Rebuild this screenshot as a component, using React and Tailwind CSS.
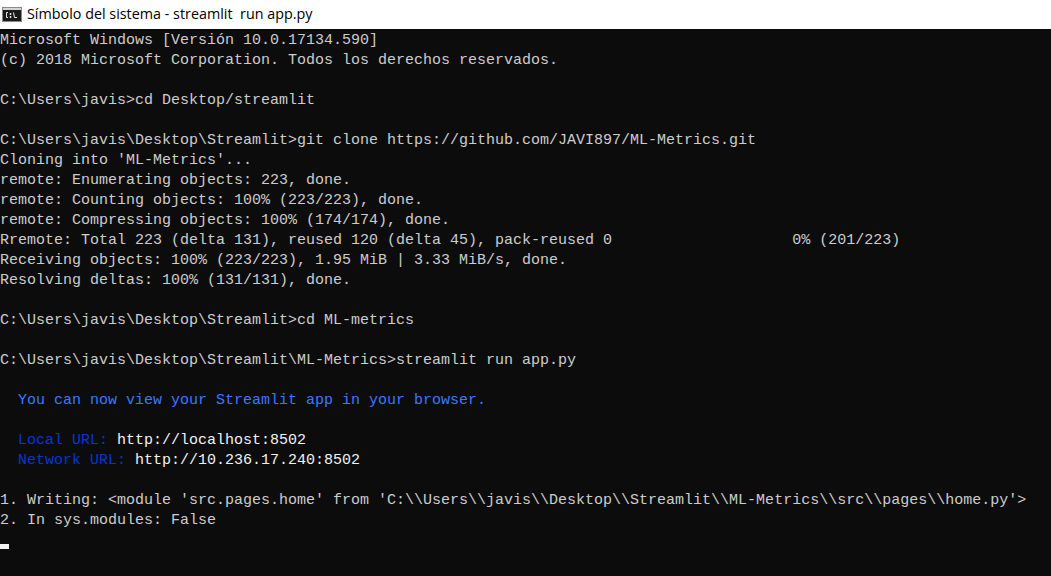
const lines = [
  "Microsoft Windows [Versión 10.0.17134.590]",
  "(c) 2018 Microsoft Corporation. Todos los derechos reservados.",
  "",
  "C:\\Users\\javis>cd Desktop/streamlit",
  "",
  "C:\\Users\\javis\\Desktop\\Streamlit>git clone https://github.com/JAVI897/ML-Metrics.git",
  "Cloning into 'ML-Metrics'...",
  "remote: Enumerating objects: 223, done.",
  "remote: Counting objects: 100% (223/223), done.",
  "remote: Compressing objects: 100% (174/174), done.",
  "Rremote: Total 223 (delta 131), reused 120 (delta 45), pack-reused 0                    0% (201/223)",
  "Receiving objects: 100% (223/223), 1.95 MiB | 3.33 MiB/s, done.",
  "Resolving deltas: 100% (131/131), done.",
  "",
  "C:\\Users\\javis\\Desktop\\Streamlit>cd ML-metrics",
  "",
  "C:\\Users\\javis\\Desktop\\Streamlit\\ML-Metrics>streamlit run app.py",
  "",
];

function ConsoleIcon() {
  return (
    <svg width="20" height="15" viewBox="0 0 20 15" className="shrink-0">
      <rect x="0.5" y="0.5" width="19" height="14" fill="#1a1a1a" stroke="#8a8a8a" />
      <rect x="1" y="1" width="18" height="2" fill="#d5d5d5" />
      <path d="M6 5.5H4.5V10.5H6M8 6.5H9V7.5H8ZM8 9.5H9V10.5H8ZM11.5 5.5L12.5 10.5H15" fill="none" stroke="#e8e8e8" strokeWidth="1" />
    </svg>
  );
}

function App() {
  return (
    <div className="h-[576px] w-[1051px] overflow-hidden bg-[#0c0c0c]">
      {/* Title bar */}
      <div className="flex h-[29px] items-center gap-[5px] bg-white pl-[2px] pb-[1px]">
        <ConsoleIcon />
        <span className="whitespace-pre text-[14.35px] text-black font-['Open_Sans',sans-serif]">
          Símbolo del sistema - streamlit  run app.py
        </span>
      </div>

      {/* Console output */}
      <div className="whitespace-pre pt-[2px] text-[15px] leading-[20px] text-[#cccccc] font-['Liberation_Mono',monospace]">
        {lines.map((line, i) => (
          <div key={i} className="h-5">{line}</div>
        ))}
        <div className="h-5 text-[#3b78ff]">  You can now view your Streamlit app in your browser.</div>
        <div className="h-5"></div>
        <div className="h-5 text-[#0037da]">
          {"  Local URL: "}<span className="text-[#f2f2f2]">http://localhost:8502</span>
        </div>
        <div className="h-5 text-[#0037da]">
          {"  Network URL: "}<span className="text-[#f2f2f2]">http://10.236.17.240:8502</span>
        </div>
        <div className="h-5"></div>
        <div className="h-5">1. Writing: &lt;module 'src.pages.home' from 'C:\\Users\\javis\\Desktop\\Streamlit\\ML-Metrics\\src\\pages\\home.py'&gt;</div>
        <div className="h-5">2. In sys.modules: False</div>
        <div className="flex h-[18px] items-end">
          <div className="h-[5px] w-[9px] bg-[#f2f2f2]"></div>
        </div>
      </div>
    </div>
  );
}

export default App;
